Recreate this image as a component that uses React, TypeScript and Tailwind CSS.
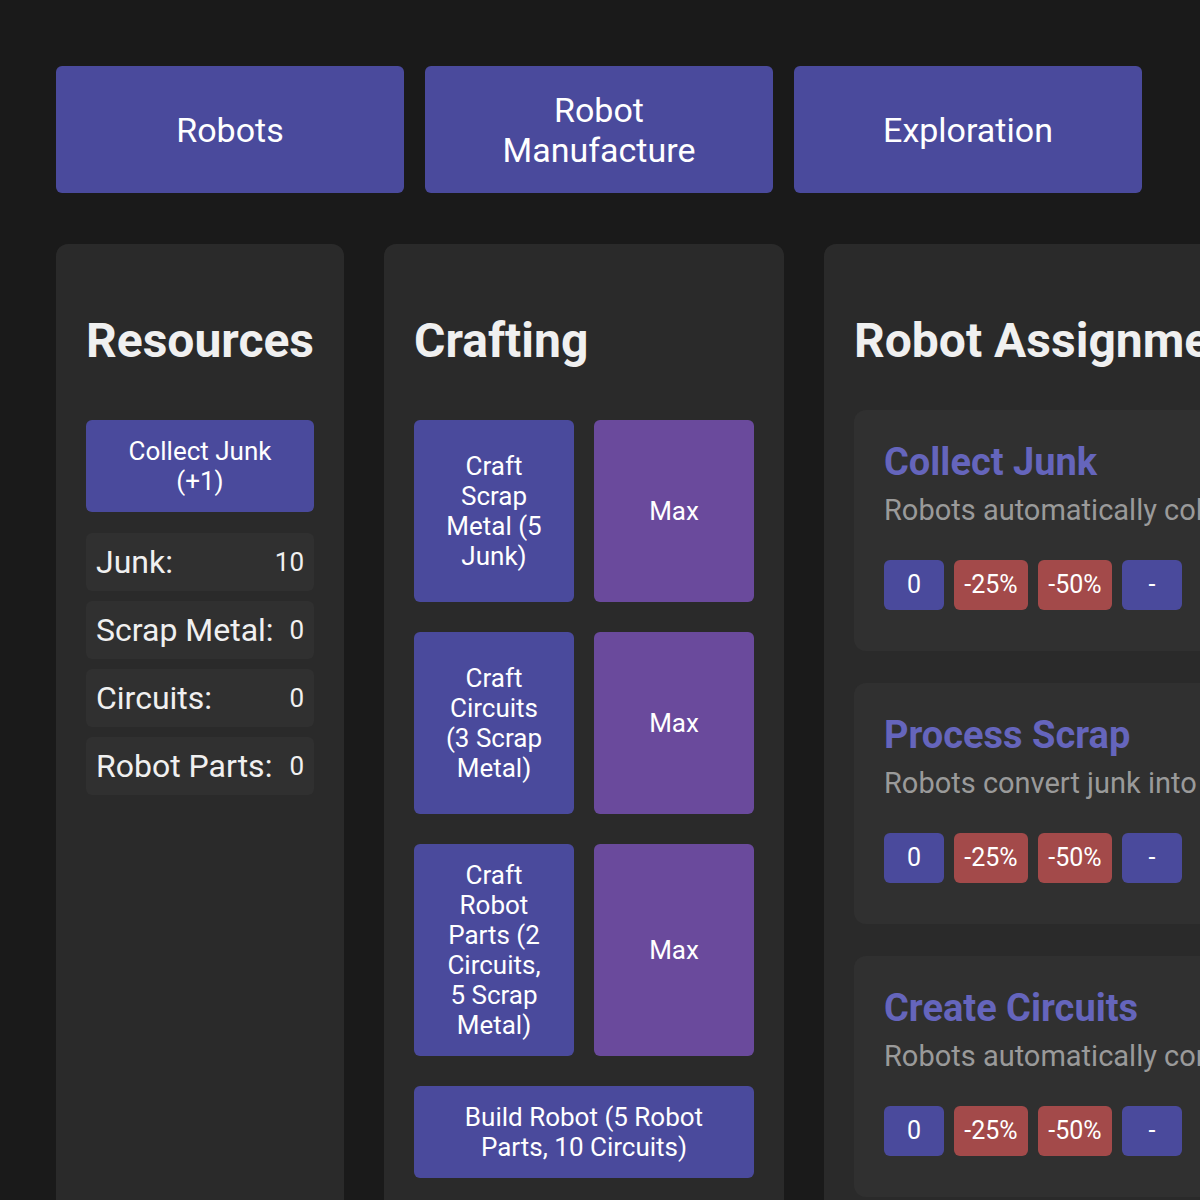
export default function App() {
  const f = { fontFamily: 'Roboto, "Liberation Sans", sans-serif' };
  const btn = "bg-[#4a4a9c] text-white rounded-[6px] flex items-center justify-center text-center";
  const cards = [
    ["Collect Junk", "Robots automatically collect junk over time"],
    ["Process Scrap", "Robots convert junk into scrap metal"],
    ["Create Circuits", "Robots automatically convert scrap into circuits"],
  ];
  const crafts: [string, number][] = [
    ["Craft Scrap Metal (5 Junk)", 182],
    ["Craft Circuits (3 Scrap Metal)", 182],
    ["Craft Robot Parts (2 Circuits, 5 Scrap Metal)", 212],
  ];
  const res = [["Junk:", "10"], ["Scrap Metal:", "0"], ["Circuits:", "0"], ["Robot Parts:", "0"]];
  return (
    <div style={f} className="w-[1200px] h-[1200px] overflow-hidden bg-[#1a1a1a] text-[#f0f0f0] px-[56px] pt-[66px]">
      <div className="flex gap-[21px]">
        {["Robots", "Robot Manufacture", "Exploration"].map((t) => (
          <div key={t} className={`${btn} w-[348px] h-[127px] text-[34px] leading-[40px] px-[60px]`}>{t}</div>
        ))}
      </div>
      <div className="flex gap-[40px] mt-[51px] items-start w-[1300px]">
        <div className="w-[288px] h-[1000px] shrink-0 bg-[#2a2a2a] rounded-[12px] px-[30px] pt-[70px]">
          <h2 className="text-[48px] font-bold leading-[54px] mb-[52px] whitespace-nowrap">Resources</h2>
          <div className={`${btn} h-[92px] text-[26px] leading-[30px]`}>Collect Junk<br />(+1)</div>
          <div className="flex flex-col gap-[10px] mt-[21px]">
            {res.map(([a, b]) => (
              <div key={a} className="h-[58px] bg-[#303030] rounded-[6px] flex items-center justify-between px-[10px]">
                <span className="text-[32px]">{a}</span>
                <span className="text-[26px]">{b}</span>
              </div>
            ))}
          </div>
        </div>
        <div className="w-[400px] h-[1000px] shrink-0 bg-[#2a2a2a] rounded-[12px] px-[30px] pt-[70px]">
          <h2 className="text-[48px] font-bold leading-[54px] mb-[52px]">Crafting</h2>
          <div className="flex flex-col gap-[30px]">
            {crafts.map(([t, h]) => (
              <div key={t} className="flex gap-[20px]" style={{ height: h }}>
                <div className={`${btn} w-[160px] text-[26px] leading-[30px] px-[30px]`}>{t}</div>
                <div className="w-[160px] bg-[#6a4a9c] text-white rounded-[6px] flex items-center justify-center text-[26px]">Max</div>
              </div>
            ))}
            <div className={`${btn} w-[340px] h-[92px] text-[26px] leading-[30px] px-[40px]`}>Build Robot (5 Robot Parts, 10 Circuits)</div>
          </div>
        </div>
        <div className="w-[500px] h-[1000px] shrink-0 bg-[#2a2a2a] rounded-[12px] px-[30px] pt-[70px]">
          <h2 className="text-[48px] font-bold leading-[54px] mb-[42px] whitespace-nowrap">Robot Assignments</h2>
          <div className="flex flex-col gap-[32px]">
            {cards.map(([t, d]) => (
              <div key={t} className="h-[241px] bg-[#303030] rounded-[12px] px-[30px] pt-[30px]">
                <div className="text-[38px] font-bold leading-[44px] text-[#6565bc] whitespace-nowrap">{t}</div>
                <div className="text-[29px] leading-[36px] text-[#9a9a9a] mt-[8px] whitespace-nowrap">{d}</div>
                <div className="flex gap-[10px] mt-[32px]">
                  <div className={`${btn} w-[60px] h-[50px] text-[25px]`}>0</div>
                  <div className="bg-[#a34a4a] text-white rounded-[6px] flex items-center justify-center w-[74px] h-[50px] text-[25px]">-25%</div>
                  <div className="bg-[#a34a4a] text-white rounded-[6px] flex items-center justify-center w-[74px] h-[50px] text-[25px]">-50%</div>
                  <div className={`${btn} w-[60px] h-[50px] text-[25px]`}>-</div>
                </div>
              </div>
            ))}
          </div>
        </div>
      </div>
    </div>
  );
}
